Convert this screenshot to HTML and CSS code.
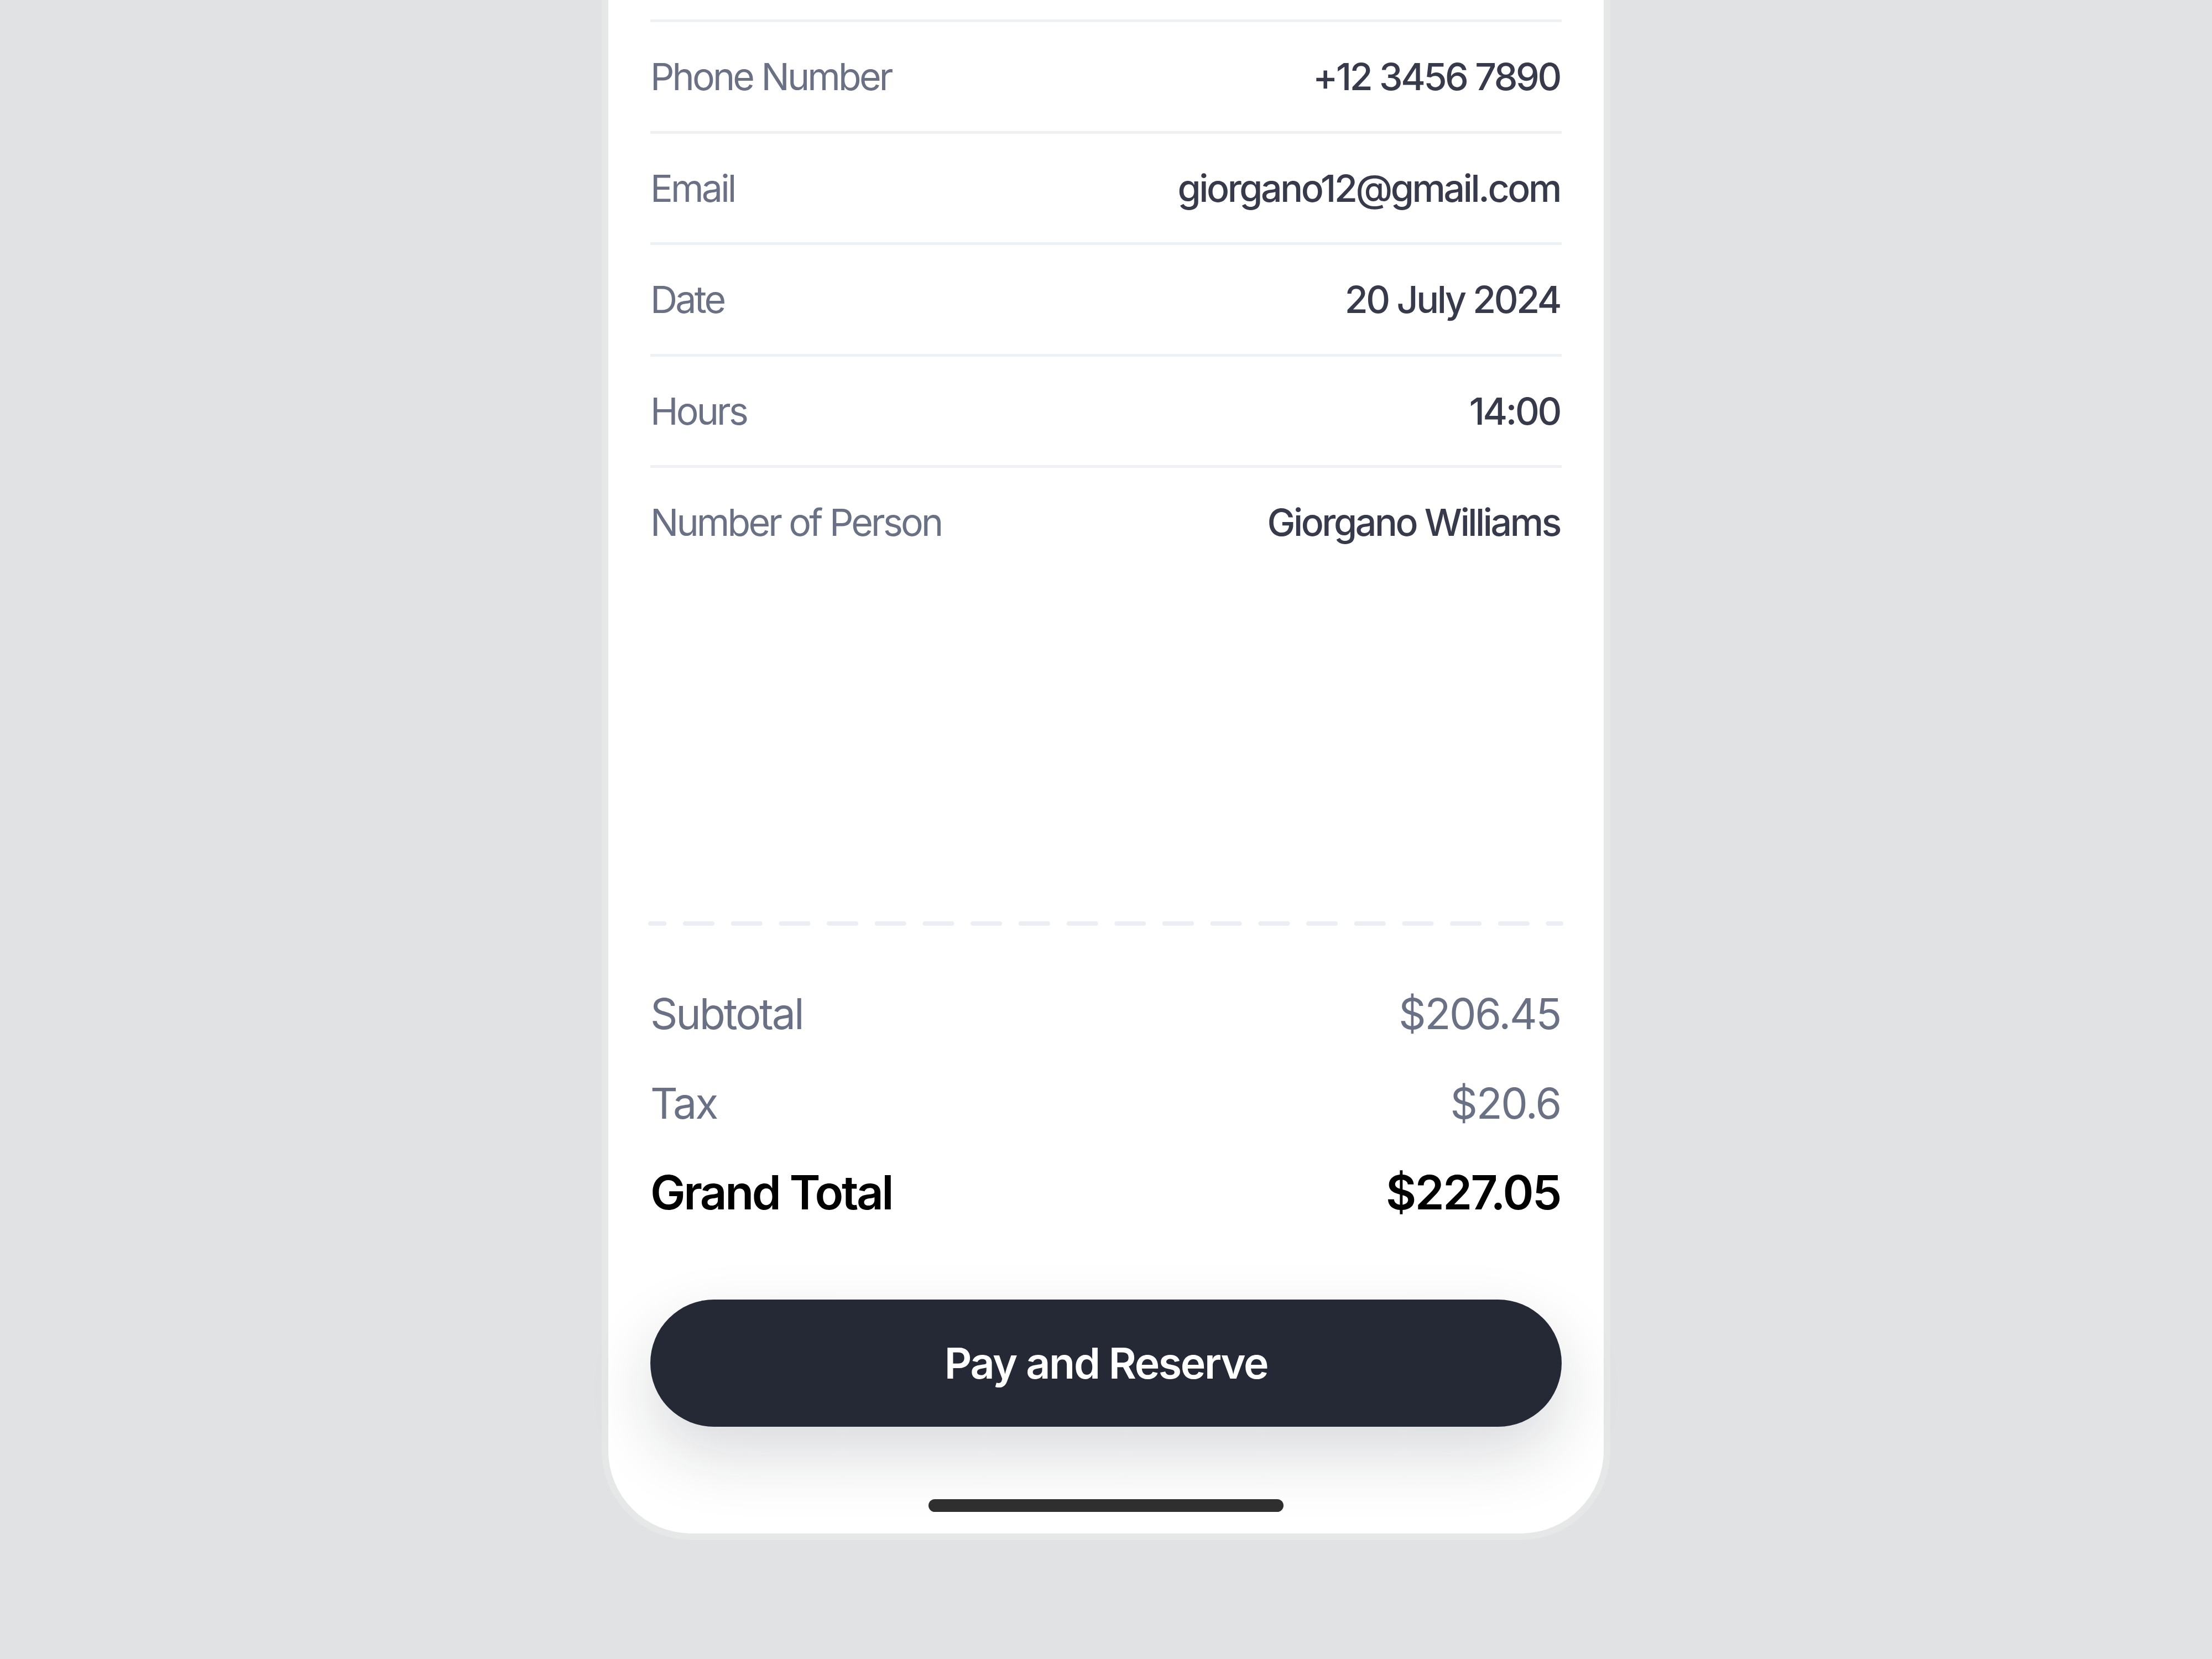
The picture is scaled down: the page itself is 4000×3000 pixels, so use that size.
FILE: index.html
```html
<!DOCTYPE html>
<html lang="en">
<head>
<meta charset="utf-8">
<title>Reservation Summary</title>
<link rel="stylesheet" href="styles.css">
</head>
<body>
<div class="stage">
  <div class="phone">
    <div class="details">
      <div class="row"><span class="label">Phone Number</span><span class="value">+12 3456 7890</span></div>
      <div class="row"><span class="label">Email</span><span class="value">giorgano12@gmail.com</span></div>
      <div class="row"><span class="label">Date</span><span class="value">20 July 2024</span></div>
      <div class="row"><span class="label">Hours</span><span class="value">14:00</span></div>
      <div class="row"><span class="label">Number of Person</span><span class="value">Giorgano Williams</span></div>
    </div>
    <svg class="dashes" width="1655" height="8" viewBox="0 0 1655 8">
      <line x1="4" y1="4" x2="1651" y2="4" stroke="#EBEEF2" stroke-width="8" stroke-linecap="round" stroke-dasharray="49 37.7" stroke-dashoffset="23.7"/>
    </svg>
    <div class="totals">
      <div class="total"><span>Subtotal</span><span class="amount">$206.45</span></div>
      <div class="total"><span>Tax</span><span class="amount">$20.6</span></div>
      <div class="total grand"><span>Grand Total</span><span class="amount">$227.05</span></div>
    </div>
    <button class="pay">Pay and Reserve</button>
    <div class="home"></div>
  </div>
</div>
</body>
</html>
```
FILE: styles.css
```css
html, body {
  margin: 0;
  padding: 0;
}
body {
  background: #E1E2E3;
  width: 4000px;
  height: 3000px;
  overflow: hidden;
  font-family: Inter, "Noto Sans", sans-serif;
}
.stage {
  display: flex;
  justify-content: center;
}
.phone {
  width: 1800px;
  height: 2773px;
  box-sizing: border-box;
  background: #FFFFFF;
  border-radius: 0 0 150px 150px;
  box-shadow: 0 0 0 12px #E6E7E7;
  padding: 35px 76px 38px;
  display: flex;
  flex-direction: column;
}
.details {
  display: flex;
  flex-direction: column;
}
.row {
  border-top: 5px solid #EDF0F4;
  height: 196.5px;
  display: flex;
  align-items: center;
  justify-content: space-between;
  font-size: 68px;
  line-height: 100px;
}
.label {
  color: #6B7185;
  font-weight: 400;
  letter-spacing: -0.056em;
}
.value {
  color: #373A4B;
  font-weight: 500;
  letter-spacing: -0.05em;
  margin-right: 3px;
}
.dashes {
  display: block;
  margin: 623px -4px 0;
}
.totals {
  display: flex;
  flex-direction: column;
  gap: 62px;
  margin-top: 109px;
}
.total {
  display: flex;
  justify-content: space-between;
  font-size: 77px;
  line-height: 100px;
  color: #6B7185;
  letter-spacing: -0.04em;
}
.amount {
  letter-spacing: -0.03em;
  margin-right: 2px;
}
.total.grand {
  font-size: 85px;
  font-weight: 600;
  color: #000000;
}
.pay {
  margin-top: 143px;
  height: 230px;
  border: none;
  border-radius: 115px;
  background: #252936;
  color: #FFFFFF;
  font-family: Inter, "Noto Sans", sans-serif;
  font-size: 77px;
  font-weight: 600;
  letter-spacing: -0.03em;
  box-shadow: 0 50px 120px rgba(20, 25, 40, 0.16);
}
.home {
  align-self: center;
  margin-top: 131px;
  width: 642px;
  height: 23px;
  border-radius: 12px;
  background: #2F2F2F;
}
```
